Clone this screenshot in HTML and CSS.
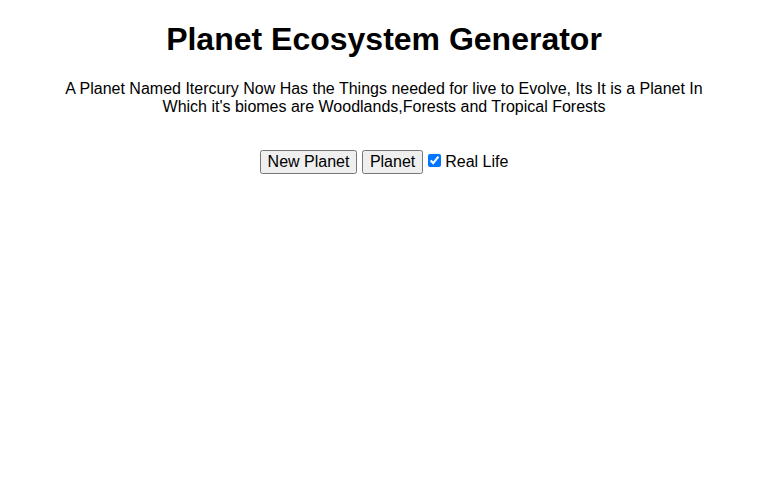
FILE: index.html
```html
<!DOCTYPE html>
<html>
<head>
<meta charset="utf-8">
<title>Planet Ecosystem Generator</title>
<link rel="stylesheet" href="styles.css">
</head>
<body>
<h1 class="title">Planet Ecosystem Generator</h1>
<p class="desc">A Planet Named Itercury Now Has the Things needed for live to Evolve, Its It is a Planet In Which it's biomes are Woodlands,Forests and Tropical Forests</p>
<div class="controls">
<button class="btn">New Planet</button>
<button class="btn">Planet</button><label class="check"><input type="checkbox" checked>Real Life</label>
</div>
</body>
</html>
```
FILE: styles.css
```css
html, body {
  margin: 0;
  padding: 0;
}
body {
  padding: 0 8px;
  font-family: "Liberation Sans", Arial, sans-serif;
  font-size: 16px;
  color: #000;
  background: #fff;
  text-align: center;
}
.title {
  font-size: 32px;
  font-weight: bold;
  margin: 0;
  padding-top: 21px;
  line-height: 37px;
  margin-bottom: 22px;
}
.desc {
  max-width: 680px;
  margin: 0 auto;
}
.controls {
  margin-top: 34px;
}
.btn {
  font-family: "Liberation Sans", Arial, sans-serif;
  font-size: 16px;
  padding: 1px 6px;
}
.check input {
  margin: 3px 4px 3px 5px;
}
```
